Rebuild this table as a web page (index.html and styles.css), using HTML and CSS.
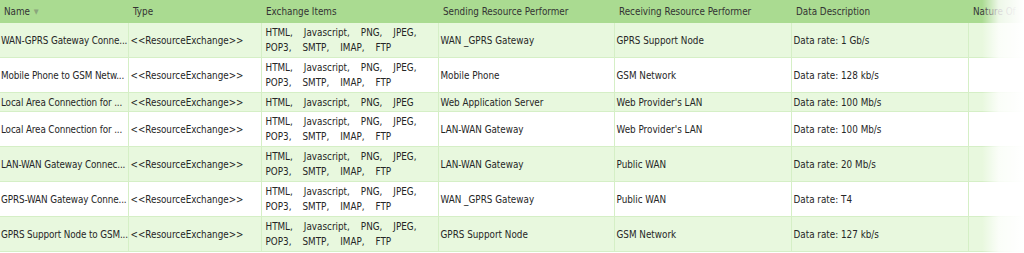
FILE: index.html
```html
<!DOCTYPE html>
<html>
<head>
<meta charset="utf-8">
<link rel="stylesheet" href="styles.css">
</head>
<body>
<div class="grid-wrap">
<table class="grid">
  <colgroup>
    <col class="c-name"><col class="c-type"><col class="c-items"><col class="c-send"><col class="c-recv"><col class="c-data"><col class="c-nature">
  </colgroup>
  <thead>
    <tr>
      <th class="first">Name <span class="sort">&#9660;</span></th>
      <th>Type</th>
      <th class="items-h">Exchange Items</th>
      <th>Sending Resource Performer</th>
      <th>Receiving Resource Performer</th>
      <th>Data Description</th>
      <th>Nature Of</th>
    </tr>
  </thead>
  <tbody>
    <tr class="alt">
      <td class="first">WAN-GPRS Gateway Conne...</td>
      <td>&lt;&lt;ResourceExchange&gt;&gt;</td>
      <td class="items"><span>HTML,</span><span>Javascript,</span><span>PNG,</span><span>JPEG,</span><span>POP3,</span><span>SMTP,</span><span>IMAP,</span><span>FTP</span></td>
      <td>WAN _GPRS Gateway</td>
      <td>GPRS Support Node</td>
      <td>Data rate: 1 Gb/s</td>
      <td></td>
    </tr>
    <tr>
      <td class="first">Mobile Phone to GSM Netw...</td>
      <td>&lt;&lt;ResourceExchange&gt;&gt;</td>
      <td class="items"><span>HTML,</span><span>Javascript,</span><span>PNG,</span><span>JPEG,</span><span>POP3,</span><span>SMTP,</span><span>IMAP,</span><span>FTP</span></td>
      <td>Mobile Phone</td>
      <td>GSM Network</td>
      <td>Data rate: 128 kb/s</td>
      <td></td>
    </tr>
    <tr class="alt single">
      <td class="first">Local Area Connection for ...</td>
      <td>&lt;&lt;ResourceExchange&gt;&gt;</td>
      <td class="items"><span>HTML,</span><span>Javascript,</span><span>PNG,</span><span>JPEG</span></td>
      <td>Web Application Server</td>
      <td>Web Provider's LAN</td>
      <td>Data rate: 100 Mb/s</td>
      <td></td>
    </tr>
    <tr>
      <td class="first">Local Area Connection for ...</td>
      <td>&lt;&lt;ResourceExchange&gt;&gt;</td>
      <td class="items"><span>HTML,</span><span>Javascript,</span><span>PNG,</span><span>JPEG,</span><span>POP3,</span><span>SMTP,</span><span>IMAP,</span><span>FTP</span></td>
      <td>LAN-WAN Gateway</td>
      <td>Web Provider's LAN</td>
      <td>Data rate: 100 Mb/s</td>
      <td></td>
    </tr>
    <tr class="alt">
      <td class="first">LAN-WAN Gateway Connec...</td>
      <td>&lt;&lt;ResourceExchange&gt;&gt;</td>
      <td class="items"><span>HTML,</span><span>Javascript,</span><span>PNG,</span><span>JPEG,</span><span>POP3,</span><span>SMTP,</span><span>IMAP,</span><span>FTP</span></td>
      <td>LAN-WAN Gateway</td>
      <td>Public WAN</td>
      <td>Data rate: 20 Mb/s</td>
      <td></td>
    </tr>
    <tr>
      <td class="first">GPRS-WAN Gateway Conne...</td>
      <td>&lt;&lt;ResourceExchange&gt;&gt;</td>
      <td class="items"><span>HTML,</span><span>Javascript,</span><span>PNG,</span><span>JPEG,</span><span>POP3,</span><span>SMTP,</span><span>IMAP,</span><span>FTP</span></td>
      <td>WAN _GPRS Gateway</td>
      <td>Public WAN</td>
      <td>Data rate: T4</td>
      <td></td>
    </tr>
    <tr class="alt">
      <td class="first">GPRS Support Node to GSM...</td>
      <td>&lt;&lt;ResourceExchange&gt;&gt;</td>
      <td class="items"><span>HTML,</span><span>Javascript,</span><span>PNG,</span><span>JPEG,</span><span>POP3,</span><span>SMTP,</span><span>IMAP,</span><span>FTP</span></td>
      <td>GPRS Support Node</td>
      <td>GSM Network</td>
      <td>Data rate: 127 kb/s</td>
      <td></td>
    </tr>
  </tbody>
</table>
<div class="fade"></div>
</div>
</body>
</html>
```
FILE: styles.css
```css
html, body {
  margin: 0;
  padding: 0;
  background: #ffffff;
}

.grid-wrap {
  position: relative;
  width: 1024px;
  height: 253px;
  overflow: hidden;
}

.grid {
  border-collapse: collapse;
  table-layout: fixed;
  width: 1100px;
  font-family: "DejaVu Sans Condensed", "DejaVu Sans", sans-serif;
  font-size: 9.8px;
  color: #262626;
}

.c-name { width: 128px; }
.c-type { width: 133px; }
.c-items { width: 177px; }
.c-send { width: 176px; }
.c-recv { width: 177px; }
.c-data { width: 177px; }
.c-nature { width: 132px; }

.grid th {
  background: #aadb91;
  height: 23px;
  padding: 0 0 0 5px;
  text-align: left;
  font-weight: normal;
  color: #333333;
  border: none;
  white-space: nowrap;
}

.grid th.first { padding-left: 4px; }

.sort {
  font-size: 7px;
  color: #8aa67c;
  vertical-align: 1px;
  margin-left: 1px;
}

.grid td {
  height: 34px;
  padding: 0 0 0 2px;
  border: 1px solid #d5efc6;
  border-top: none;
  white-space: nowrap;
  overflow: hidden;
  vertical-align: middle;
  line-height: 15px;
}

.grid td.first {
  border-left: none;
  padding-left: 1px;
  letter-spacing: -0.12px;
}

.grid tr.single td { height: 18px; }

.grid tr.alt td { background: #e8f8de; }

.grid td.items {
  white-space: normal;
  padding-left: 4px;
  padding-right: 0;
}

.items span {
  display: inline-block;
  margin-right: 11px;
}

.fade {
  position: absolute;
  top: 0;
  right: 0;
  width: 42px;
  height: 253px;
  background: linear-gradient(to right, rgba(255,255,255,0) 0%, rgba(255,255,255,0.8) 40%, #ffffff 100%);
}
```
